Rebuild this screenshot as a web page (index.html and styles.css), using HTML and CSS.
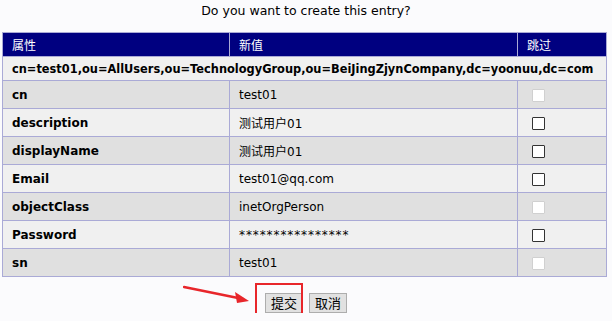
FILE: index.html
```html
<!DOCTYPE html>
<html lang="en">
<head>
    <meta charset="UTF-8">
    <title>Create Entry</title>
    <link rel="stylesheet" href="styles.css">
</head>
<body>
    <div class="page">
        <h1 class="question">Do you want to create this entry?</h1>
        <table class="entry-table">
            <thead>
                <tr>
                    <th class="col-attr">属性</th>
                    <th class="col-value">新值</th>
                    <th class="col-skip">跳过</th>
                </tr>
            </thead>
            <tbody>
                <tr class="row-light">
                    <td class="dn" colspan="3">cn=test01,ou=AllUsers,ou=TechnologyGroup,ou=BeiJingZjynCompany,dc=yoonuu,dc=com</td>
                </tr>
                <tr class="row-dark">
                    <td class="attr">cn</td>
                    <td>test01</td>
                    <td><input type="checkbox" class="skip" disabled></td>
                </tr>
                <tr class="row-light">
                    <td class="attr">description</td>
                    <td>测试用户01</td>
                    <td><input type="checkbox" class="skip"></td>
                </tr>
                <tr class="row-dark">
                    <td class="attr">displayName</td>
                    <td>测试用户01</td>
                    <td><input type="checkbox" class="skip"></td>
                </tr>
                <tr class="row-light">
                    <td class="attr">Email</td>
                    <td>test01@qq.com</td>
                    <td><input type="checkbox" class="skip"></td>
                </tr>
                <tr class="row-dark">
                    <td class="attr">objectClass</td>
                    <td>inetOrgPerson</td>
                    <td><input type="checkbox" class="skip" disabled></td>
                </tr>
                <tr class="row-light">
                    <td class="attr">Password</td>
                    <td class="secret">****************</td>
                    <td><input type="checkbox" class="skip"></td>
                </tr>
                <tr class="row-dark">
                    <td class="attr">sn</td>
                    <td>test01</td>
                    <td><input type="checkbox" class="skip" disabled></td>
                </tr>
            </tbody>
        </table>
        <div class="actions">
            <button type="submit" class="btn">提交</button>
            <button type="button" class="btn">取消</button>
            <!-- annotation drawn over the screenshot -->
            <div class="mark-box"></div>
            <svg class="mark-arrow" width="80" height="24" viewBox="0 0 80 24">
                <line x1="1" y1="3" x2="60" y2="15" stroke="#e8262b" stroke-width="2.5" stroke-linecap="round"/>
                <polygon points="66,17 52,8 54,19" fill="#e8262b"/>
            </svg>
        </div>
    </div>
</body>
</html>
```

FILE: styles.css
```css
:root {
    --header-bg: #000080;
    --grid-color: #aaaad6;
    --row-light: #f0f0f0;
    --row-dark: #e0e0e0;
    --text-color: #000000;
    --page-bg: #fbfbfd;
}
body {
    margin: 0;
    background-color: var(--page-bg);
    color: var(--text-color);
    font-family: "DejaVu Sans", "Noto Sans CJK SC", sans-serif;
    font-size: 12px;
}
.page {
    padding: 0 2px;
}
.question {
    margin: 0;
    height: 32px;
    padding-top: 3px;
    box-sizing: border-box;
    text-align: center;
    font-size: 12.5px;
    font-weight: normal;
}
.entry-table {
    width: 605px;
    border-collapse: collapse;
    border: 1px solid var(--grid-color);
}
.entry-table th,
.entry-table td {
    border: 1px solid var(--grid-color);
    padding: 0 9px;
    text-align: left;
    vertical-align: middle;
}
.entry-table th {
    height: 23px;
    background-color: var(--header-bg);
    color: #fff;
    font-weight: normal;
    font-size: 12px;
}
.col-attr {
    width: 208px;
}
.col-value {
    width: 269px;
}
.entry-table td {
    height: 27px;
}
.entry-table td.dn {
    height: 23px;
    font-weight: bold;
    font-size: 11.4px;
}
.row-light {
    background-color: var(--row-light);
}
.row-dark {
    background-color: var(--row-dark);
}
.attr {
    font-weight: bold;
}
.entry-table td.secret {
    letter-spacing: 0.9px;
    color: #000;
}
.skip {
    appearance: none;
    width: 13px;
    height: 13px;
    margin: 2px 0 0 5px;
    border: 1px solid #333;
    border-radius: 1px;
    background-color: #fff;
    box-sizing: border-box;
    vertical-align: middle;
}
.skip:disabled {
    border-color: #d0d0d0;
}
.actions {
    position: relative;
    display: flex;
    justify-content: center;
    gap: 6px;
    margin-top: 16px;
}
.btn {
    height: 20px;
    padding: 0 5px;
    border: 1px solid #adadad;
    background-color: #e1e1e1;
    font-family: "Noto Sans CJK SC", sans-serif;
    font-size: 13px;
    line-height: 16px;
    color: #000;
}
.mark-box {
    position: absolute;
    left: 253px;
    top: -10px;
    width: 44px;
    height: 29px;
    border: 2px solid #e8262b;
}
.mark-arrow {
    position: absolute;
    left: 181px;
    top: -9px;
}
```
